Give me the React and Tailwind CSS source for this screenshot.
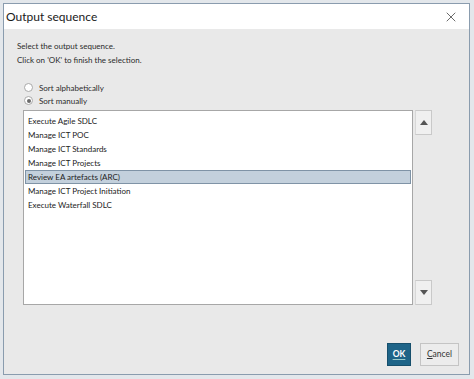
import { X } from 'lucide-react'

const ITEMS = [
  'Execute Agile SDLC',
  'Manage ICT POC',
  'Manage ICT Standards',
  'Manage ICT Projects',
  'Review EA artefacts (ARC)',
  'Manage ICT Project Initiation',
  'Execute Waterfall SDLC',
]

function Radio({ checked, label }) {
  return (
    <div className="flex items-center h-[13px] gap-[6px]">
      <span className="w-[9px] h-[9px] rounded-full border border-[#a9a9a9] bg-white flex items-center justify-center">
        {checked && <span className="w-[4px] h-[4px] rounded-full bg-[#6b6b6b]" />}
      </span>
      <span className="text-[8px] text-[#2b2b2b]">{label}</span>
    </div>
  )
}

function ScrollBtn({ up }) {
  return (
    <div className="w-[17px] h-[25px] bg-[#f0f0f0] border border-[#c9c9c9] border-l-[#d8d8d8] flex items-center justify-center">
      <svg width="8" height="5" viewBox="0 0 8 5">
        {up ? <path d="M0 5 L4 0 L8 5 Z" fill="#555" /> : <path d="M0 0 L4 5 L8 0 Z" fill="#555" />}
      </svg>
    </div>
  )
}

export default function App() {
  return (
    <div className="w-[474px] h-[379px] bg-[#e3e7eb] pt-[3px] pl-[3px]" style={{ fontFamily: 'Lato, "Open Sans", sans-serif' }}>
      <div className="w-[467px] h-[372px] border border-[#8a9cae] flex flex-col bg-[#e9e9e9]">
        <div className="h-[25px] bg-white flex items-center justify-between pl-[2px] pr-[10px]">
          <span className="text-[12px] text-[#1a1a1a] leading-none">Output sequence</span>
          <X size={16} strokeWidth={1.2} className="text-[#444]" />
        </div>
        <div className="flex-1 flex flex-col pl-[19px] pr-[37px] pt-[10px]">
          <div className="-ml-[6px] text-[8px] text-[#2b2b2b] leading-[14px]">
            <div>Select the output sequence.</div>
            <div>Click on 'OK' to finish the selection.</div>
          </div>
          <div className="mt-[14px] flex flex-col ml-[1px]">
            <Radio label="Sort alphabetically" />
            <Radio checked label="Sort manually" />
          </div>
          <div className="mt-[3px] flex gap-[2px] h-[195px]">
            <div className="flex-1 bg-white border border-[#a7a7a7] py-[3px] px-[1px]">
              {ITEMS.map((t, i) => (
                <div
                  key={t}
                  className={
                    i === 4
                      ? 'h-[14px] flex items-center pl-[2px] text-[8px] text-[#222] bg-[#c3d0dc] border border-[#7f93a6]'
                      : 'h-[14px] flex items-center pl-[3px] text-[8px] text-[#222]'
                  }
                >
                  {t}
                </div>
              ))}
            </div>
            <div className="flex flex-col justify-between">
              <ScrollBtn up />
              <ScrollBtn />
            </div>
          </div>
          <div className="flex justify-end gap-[9px] mt-[38px] -mr-[27px]">
            <div className="w-[24px] h-[23px] bg-[#1e6488] border border-[#174f6c] flex items-center justify-center text-white text-[8.5px] font-bold">
              <span className="underline underline-offset-2 decoration-[#9cc]">OK</span>
            </div>
            <div className="w-[39px] h-[23px] bg-[#ececec] border border-[#c4c4c4] flex items-center justify-center text-[8.5px] text-[#333]">
              <span><span className="underline">C</span>ancel</span>
            </div>
          </div>
        </div>
      </div>
    </div>
  )
}
